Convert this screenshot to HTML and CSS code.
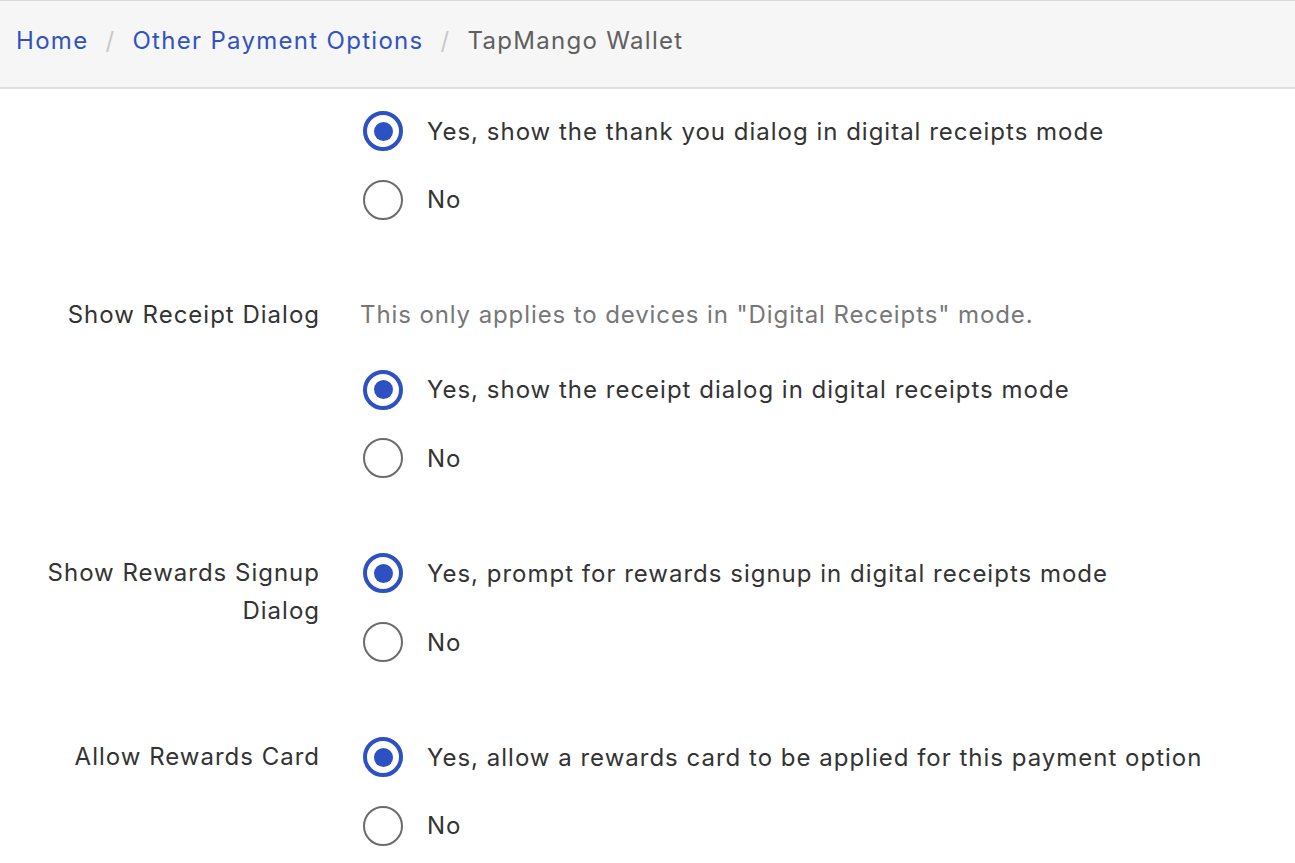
FILE: index.html
```html
<!DOCTYPE html>
<html>
<head>
<meta charset="utf-8">
<link rel="stylesheet" href="styles.css">
</head>
<body>
<nav class="crumbs">
  <a class="crumb-link" href="#">Home</a>
  <span class="sep">/</span>
  <a class="crumb-link" href="#">Other Payment Options</a>
  <span class="sep">/</span>
  <span class="crumb-current">TapMango Wallet</span>
</nav>
<main class="form">
  <section class="field first">
    <div class="label"></div>
    <div class="controls">
      <label class="radio"><span class="dot checked"></span><span>Yes, show the thank you dialog in digital receipts mode</span></label>
      <label class="radio"><span class="dot"></span><span>No</span></label>
    </div>
  </section>
  <section class="field">
    <div class="label">Show Receipt Dialog</div>
    <div class="controls">
      <p class="desc">This only applies to devices in "Digital Receipts" mode.</p>
      <label class="radio"><span class="dot checked"></span><span>Yes, show the receipt dialog in digital receipts mode</span></label>
      <label class="radio"><span class="dot"></span><span>No</span></label>
    </div>
  </section>
  <section class="field">
    <div class="label">Show Rewards Signup Dialog</div>
    <div class="controls">
      <label class="radio"><span class="dot checked"></span><span>Yes, prompt for rewards signup in digital receipts mode</span></label>
      <label class="radio"><span class="dot"></span><span>No</span></label>
    </div>
  </section>
  <section class="field">
    <div class="label">Allow Rewards Card</div>
    <div class="controls">
      <label class="radio"><span class="dot checked"></span><span>Yes, allow a rewards card to be applied for this payment option</span></label>
      <label class="radio"><span class="dot"></span><span>No</span></label>
    </div>
  </section>
</main>
</body>
</html>
```
FILE: styles.css
```css
html, body {
  margin: 0;
  padding: 0;
  background: #fff;
  overflow: hidden;
}
body {
  font-family: Inter, Roboto, "Liberation Sans", sans-serif;
  font-size: 24px;
  letter-spacing: 1px;
  color: #333;
}
.crumbs {
  display: flex;
  align-items: center;
  box-sizing: border-box;
  height: 89px;
  padding: 0 16px 8px;
  background: #f6f6f6;
  border-top: 1px solid #dadada;
  border-bottom: 2px solid #dedede;
  white-space: nowrap;
  letter-spacing: 1.3px;
}
.crumb-link {
  color: #3152c2;
  text-decoration: none;
}
.sep {
  color: #c8c8c8;
  padding: 0 17px;
}
.crumb-current {
  color: #5f5f5f;
}
.form {
  padding-top: 8px;
}
.field {
  display: grid;
  grid-template-columns: 320px 1fr;
  column-gap: 40px;
  margin-top: 46.4px;
}
.field.first {
  margin-top: 0;
}
.label {
  text-align: right;
  line-height: 38px;
  padding-top: 15px;
  color: #333;
}
.controls {
  display: flex;
  flex-direction: column;
}
.desc {
  margin: 15px 0 22px;
  line-height: 38px;
  color: #777;
  letter-spacing: 0.9px;
}
.radio {
  display: flex;
  align-items: center;
  height: 68.6px;
  gap: 24px;
  padding-left: 3px;
  color: #333;
}
.dot {
  box-sizing: border-box;
  width: 40px;
  height: 40px;
  border-radius: 50%;
  border: 2.5px solid #6b6b6b;
  flex: none;
  display: flex;
  align-items: center;
  justify-content: center;
}
.dot.checked {
  border: 4px solid #2d50c3;
}
.dot.checked::after {
  content: "";
  width: 19px;
  height: 19px;
  border-radius: 50%;
  background: #2d50c3;
}
```
